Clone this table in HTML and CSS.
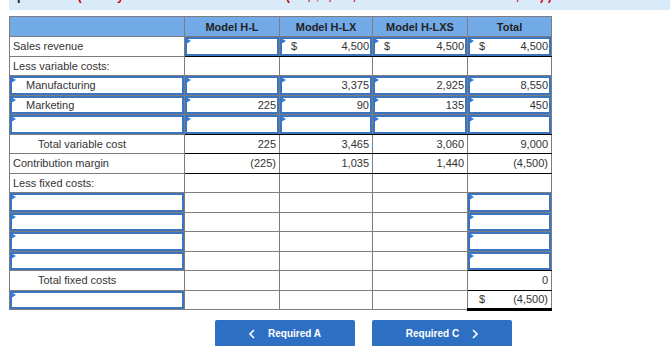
FILE: index.html
```html
<!DOCTYPE html>
<html>
<head>
<meta charset="utf-8">
<link rel="stylesheet" href="styles.css">
</head>
<body>
<div class="banner"><p><span class="blk">products.</span> <span class="red">(Enter your answers in thousands. (i.e., $5,400,000 should be entered as 5,400).)</span></p></div>
<table class="sheet">
  <colgroup>
    <col class="c-label"><col class="c-hl"><col class="c-hlx"><col class="c-hlxs"><col class="c-tot">
  </colgroup>
  <thead>
    <tr class="head"><th></th><th>Model H-L</th><th>Model H-LX</th><th>Model H-LXS</th><th>Total</th></tr>
  </thead>
  <tbody>
    <tr><td class="lbl">Sales revenue</td><td class="in bb"></td><td class="in bb num"><span class="cur">$</span>4,500</td><td class="in bb num"><span class="cur">$</span>4,500</td><td class="in bb num"><span class="cur">$</span>4,500</td></tr>
    <tr><td class="lbl">Less variable costs:</td><td></td><td></td><td></td><td></td></tr>
    <tr><td class="in lbl ind">Manufacturing</td><td class="in"></td><td class="in num">3,375</td><td class="in num">2,925</td><td class="in num">8,550</td></tr>
    <tr><td class="in lbl ind">Marketing</td><td class="in num">225</td><td class="in num">90</td><td class="in num">135</td><td class="in num">450</td></tr>
    <tr><td class="in"></td><td class="in bb"></td><td class="in bb"></td><td class="in bb"></td><td class="in bb"></td></tr>
    <tr><td class="lbl ind2">Total variable cost</td><td class="num bb">225</td><td class="num bb">3,465</td><td class="num bb">3,060</td><td class="num bb">9,000</td></tr>
    <tr><td class="lbl">Contribution margin</td><td class="num bb">(225)</td><td class="num bb">1,035</td><td class="num bb">1,440</td><td class="num bb">(4,500)</td></tr>
    <tr><td class="lbl">Less fixed costs:</td><td></td><td></td><td></td><td></td></tr>
    <tr><td class="in"></td><td></td><td></td><td></td><td class="in"></td></tr>
    <tr><td class="in"></td><td></td><td></td><td></td><td class="in"></td></tr>
    <tr><td class="in"></td><td></td><td></td><td></td><td class="in"></td></tr>
    <tr><td class="in"></td><td></td><td></td><td></td><td class="in bb"></td></tr>
    <tr><td class="lbl ind2">Total fixed costs</td><td></td><td></td><td></td><td class="num bb">0</td></tr>
    <tr><td class="in"></td><td></td><td></td><td></td><td class="num final"><span class="cur">$</span>(4,500)</td></tr>
  </tbody>
</table>
<div class="nav">
  <button class="btn"><svg class="chev" width="6" height="10" viewBox="0 0 6 10"><path d="M5 1 L1 5 L5 9" fill="none" stroke="#fff" stroke-width="1.6"/></svg><span>Required A</span></button>
  <button class="btn"><span>Required C</span><svg class="chev" width="6" height="10" viewBox="0 0 6 10"><path d="M1 1 L5 5 L1 9" fill="none" stroke="#fff" stroke-width="1.6"/></svg></button>
</div>
</body>
</html>
```
FILE: styles.css
```css
html, body {
  margin: 0;
  padding: 0;
  background: #fff;
  width: 670px;
  height: 346px;
  overflow: hidden;
  font-family: "Liberation Sans", Arial, sans-serif;
  color: #333;
}
.banner {
  margin-left: 9px;
  height: 10px;
  overflow: hidden;
  background: #d9eaf8;
}
.banner p {
  margin: -11px 0 0 0;
  padding-left: 8px;
  font-size: 12.5px;
  line-height: 14px;
  white-space: nowrap;
  font-weight: bold;
}
.blk { color: #222; }
.red { color: #d0021b; }

.sheet {
  margin: 6px 0 0 9px;
  border-collapse: collapse;
  table-layout: fixed;
  width: 542px;
  font-size: 11px;
}
.c-label { width: 175px; }
.c-hl { width: 95px; }
.c-hlx { width: 93px; }
.c-hlxs { width: 95px; }
.c-tot { width: 84px; }

.sheet tbody tr { height: 19.5px; }
.sheet thead tr { height: 20px; }

.sheet th, .sheet td {
  border: 1px solid #7d7d7d;
  padding: 0 3px;
  line-height: 12px;
  vertical-align: middle;
  position: relative;
  white-space: nowrap;
}
.head th {
  background: #72aae8;
  font-weight: bold;
  color: #222;
  font-size: 11px;
  text-align: center;
}
.sheet td.lbl { padding-left: 3px; }
.sheet td.ind { padding-left: 16px; }
.sheet td.ind2 { padding-left: 28px; }
.num { text-align: right; }
.cur {
  float: left;
  margin-left: 8px;
}
.sheet td.in {
  box-shadow: inset 0 0 0 2px #3c74bf;
}
.sheet td.in::before {
  content: "";
  position: absolute;
  left: 1px;
  top: 1px;
  border-left: 5px solid #2f7ad9;
  border-top: 3px solid transparent;
  border-bottom: 3px solid transparent;
}
.sheet td.bb { border-bottom: 1px solid #000; }
.sheet td.final { border-bottom: 3px solid #000; }

.nav {
  display: flex;
  gap: 17px;
  margin: 9px 0 0 215px;
}
.btn {
  width: 140px;
  height: 27px;
  border: 0;
  border-radius: 2px;
  background: #2d6fc3;
  color: #fff;
  font-family: "Liberation Sans", Arial, sans-serif;
  font-weight: bold;
  font-size: 10px;
  display: flex;
  align-items: center;
  justify-content: center;
  gap: 13px;
  padding: 0;
}
.chev { display: block; }
```
